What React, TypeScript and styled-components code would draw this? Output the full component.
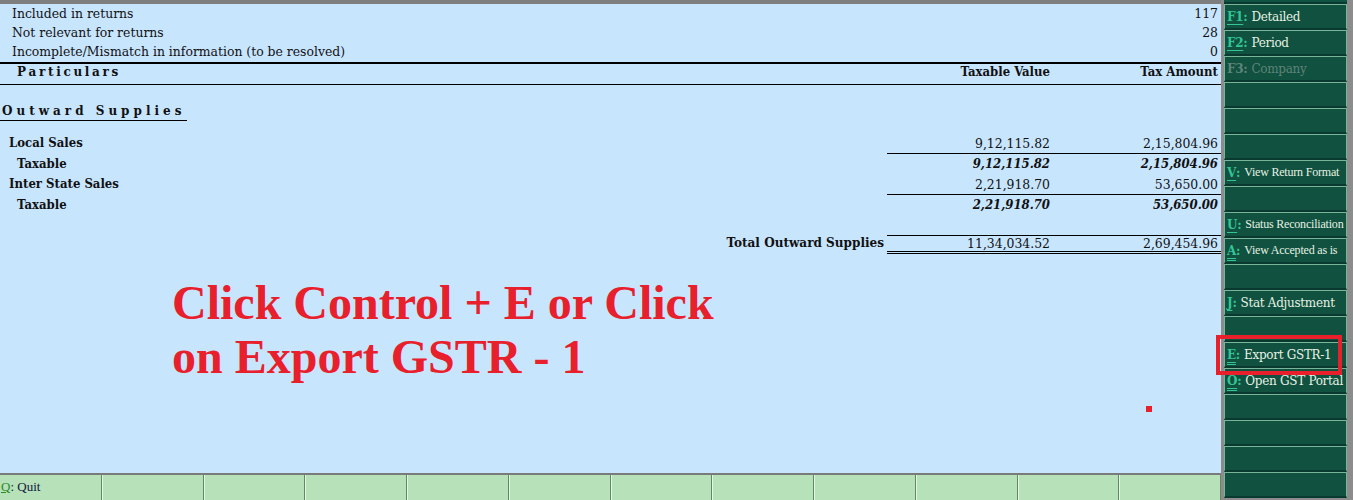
import React from 'react';
import styled, { createGlobalStyle, css } from 'styled-components';

const GlobalStyle = createGlobalStyle`
  html, body {
    margin: 0;
    padding: 0;
    background: #8c8c8c;
    overflow: hidden;
  }
  body {
    font-family: "DejaVu Serif", serif;
  }
`;

const serif = `"DejaVu Serif Condensed", "DejaVu Serif", serif`;
const wideSerif = `"DejaVu Serif", serif`;
const narrowSerif = `"Liberation Serif", "Times New Roman", serif`;

type SideItem = {
  keyName?: string;
  label?: string;
  disabled?: boolean;
  narrow?: boolean;
  double?: boolean;
};

const sideItems: SideItem[] = [
  { keyName: 'F1', label: 'Detailed' },
  { keyName: 'F2', label: 'Period' },
  { keyName: 'F3', label: 'Company', disabled: true },
  {},
  {},
  {},
  { keyName: 'V', label: 'View Return Format', narrow: true },
  {},
  { keyName: 'U', label: 'Status Reconciliation', narrow: true },
  { keyName: 'A', label: 'View Accepted as is', narrow: true, double: true },
  {},
  { keyName: 'J', label: 'Stat Adjustment' },
  {},
  { keyName: 'E', label: 'Export GSTR-1', double: true },
  { keyName: 'O', label: 'Open GST Portal', double: true },
  {},
  {},
  {},
  {},
];

const summary = [
  { label: 'Included in returns', value: '117' },
  { label: 'Not relevant for returns', value: '28' },
  { label: 'Incomplete/Mismatch in information (to be resolved)', value: '0' },
];

type Line = {
  label: string;
  taxable: string;
  tax: string;
  indent?: boolean;
  italic?: boolean;
  rule?: boolean;
};

const lines: Line[] = [
  { label: 'Local Sales', taxable: '9,12,115.82', tax: '2,15,804.96', rule: true },
  { label: 'Taxable', taxable: '9,12,115.82', tax: '2,15,804.96', indent: true, italic: true },
  { label: 'Inter State Sales', taxable: '2,21,918.70', tax: '53,650.00', rule: true },
  { label: 'Taxable', taxable: '2,21,918.70', tax: '53,650.00', indent: true, italic: true },
];

function App() {
  return (
    <>
      <GlobalStyle />
      <Screen>
        <MainColumn>
          <TopStrip />
          <Report>
            {summary.map((s) => (
              <SummaryRow key={s.label}>
                <span>{s.label}</span>
                <span>{s.value}</span>
              </SummaryRow>
            ))}
            <HeaderRow>
              <Spaced>Particulars</Spaced>
              <HeadCell>Taxable Value</HeadCell>
              <HeadCell>Tax Amount</HeadCell>
            </HeaderRow>
            <Section>
              <SectionTitle>Outward Supplies</SectionTitle>
            </Section>
            {lines.map((l, i) => (
              <DataRow key={i}>
                <Label $indent={l.indent}>{l.label}</Label>
                <Amount $italic={l.italic} $rule={l.rule}>
                  {l.taxable}
                </Amount>
                <Amount $italic={l.italic} $rule={l.rule}>
                  {l.tax}
                </Amount>
              </DataRow>
            ))}
            <TotalRow>
              <TotalLabel>Total Outward Supplies</TotalLabel>
              <TotalAmount>11,34,034.52</TotalAmount>
              <TotalAmount>2,69,454.96</TotalAmount>
            </TotalRow>
            <Callout>
              Click Control + E or Click
              <br />
              on Export GSTR - 1
            </Callout>
            <Dot />
          </Report>
          <ButtonBar>
            {Array.from({ length: 12 }).map((_, i) => (
              <BarCell key={i}>
                {i === 0 && (
                  <>
                    <BarKey>Q</BarKey>: Quit
                  </>
                )}
              </BarCell>
            ))}
          </ButtonBar>
        </MainColumn>
        <Sidebar>
          <SideStub />
          {sideItems.map((item, i) => (
            <SideButton key={i} $disabled={item.disabled}>
              {item.keyName && (
                <>
                  <SideKey $disabled={item.disabled} $double={item.double}>
                    {item.keyName}
                  </SideKey>
                  <SideColon $disabled={item.disabled}>:</SideColon>
                  <SideLabel $narrow={item.narrow}>{item.label}</SideLabel>
                </>
              )}
            </SideButton>
          ))}
          <Highlight />
        </Sidebar>
      </Screen>
    </>
  );
}

const Screen = styled.div`
  display: grid;
  grid-template-columns: 1221px 1fr;
  height: 500px;
  width: 1353px;
  background: #8c8c8c;
`;

const MainColumn = styled.div`
  display: flex;
  flex-direction: column;
  height: 500px;
`;

const TopStrip = styled.div`
  height: 4px;
  background: #7e7e7e;
  flex: none;
`;

const Report = styled.div`
  position: relative;
  flex: 1;
  background: #c8e5fe;
  color: #111;
  font-family: ${serif};
  font-stretch: condensed;
  font-size: 13.8px;
  border-bottom: 2px solid #7a7a7a;
`;

const SummaryRow = styled.div`
  display: flex;
  justify-content: space-between;
  height: 19px;
  line-height: 18px;
  padding: 0 3px 0 12px;
`;

const HeaderRow = styled.div`
  display: grid;
  grid-template-columns: 1fr 166px 168px;
  height: 20px;
  line-height: 16px;
  margin-top: 1px;
  border-top: 2px solid #000;
  border-bottom: 1px solid #000;
  font-weight: bold;
  font-size: 13px;
`;

const Spaced = styled.span`
  padding-left: 17px;
  font-family: ${wideSerif};
  font-stretch: normal;
  font-size: 12px;
  letter-spacing: 2.7px;
`;

const HeadCell = styled.span`
  text-align: right;
  padding-right: 3px;
`;

const Section = styled.div`
  padding-top: 17px;
  height: 48px;
  box-sizing: border-box;
`;

const SectionTitle = styled.span`
  display: inline-block;
  padding: 0 2px;
  line-height: 17px;
  font-family: ${wideSerif};
  font-stretch: normal;
  font-size: 12px;
  font-weight: bold;
  letter-spacing: 4px;
  border-bottom: 1px solid #000;
`;

const DataRow = styled.div`
  display: grid;
  grid-template-columns: 1fr 166px 168px;
  height: 20.5px;
  line-height: 20px;
`;

const Label = styled.span<{ $indent?: boolean }>`
  font-weight: bold;
  font-size: 13px;
  padding-left: ${(p) => (p.$indent ? '17px' : '9px')};
`;

const Amount = styled.span<{ $italic?: boolean; $rule?: boolean }>`
  text-align: right;
  padding-right: 3px;
  ${(p) =>
    p.$italic &&
    css`
      font-style: italic;
      font-weight: bold;
      font-size: 13px;
    `}
  ${(p) =>
    p.$rule &&
    css`
      border-bottom: 1px solid #000;
    `}
`;

const TotalRow = styled.div`
  display: grid;
  grid-template-columns: 1fr 166px 168px;
  margin-top: 20px;
  height: 17px;
  line-height: 15px;
`;

const TotalLabel = styled.span`
  font-weight: bold;
  font-size: 13.4px;
  text-align: right;
  padding-right: 3px;
`;

const TotalAmount = styled.span`
  text-align: right;
  padding-right: 3px;
  border-top: 1px solid #000;
  border-bottom: 3px double #000;
`;

const Callout = styled.div`
  margin: 24px 0 0 172px;
  font-family: "Liberation Serif", "Times New Roman", serif;
  font-stretch: normal;
  font-weight: bold;
  font-size: 48px;
  line-height: 54px;
  color: #e8202b;
`;

const Dot = styled.div`
  position: absolute;
  left: 1146px;
  top: 402px;
  width: 6px;
  height: 6px;
  background: #e8202b;
`;

const ButtonBar = styled.div`
  display: grid;
  grid-template-columns: repeat(12, 1fr);
  height: 25px;
  flex: none;
  background: #b7e1b9;
`;

const BarCell = styled.div`
  border-left: 1px solid #e6f6e6;
  border-right: 1px solid #5f8a5f;
  font-family: ${narrowSerif};
  font-size: 13px;
  line-height: 24px;
  color: #10203f;
  padding-left: 1px;
  &:first-child {
    border-left: none;
  }
`;

const BarKey = styled.span`
  color: #2a8a2a;
  text-decoration: underline;
`;

const Sidebar = styled.div`
  position: relative;
  display: flex;
  flex-direction: column;
  padding: 0 6px 0 3px;
`;

const SideStub = styled.div`
  height: 2px;
  background: #0f5342;
  border-bottom: 2px solid #0a3a2f;
`;

const SideButton = styled.div<{ $disabled?: boolean }>`
  box-sizing: border-box;
  height: 26px;
  display: flex;
  align-items: center;
  padding-left: 2px;
  white-space: nowrap;
  overflow: hidden;
  background: #10513f;
  border: 1px solid #79b598;
  border-bottom: 2px solid #0a3a2f;
  color: ${(p) => (p.$disabled ? '#5f8379' : '#e6f2e4')};
  font-family: ${wideSerif};
  font-size: 12px;
  letter-spacing: -0.3px;
`;

const SideKey = styled.span<{ $disabled?: boolean; $double?: boolean }>`
  font-weight: bold;
  color: ${(p) => (p.$disabled ? '#5f8379' : '#34c496')};
  text-decoration: ${(p) => (p.$disabled ? 'none' : 'underline')};
  text-decoration-style: ${(p) => (p.$double ? 'double' : 'solid')};
  text-underline-offset: 3px;
`;

const SideColon = styled.span<{ $disabled?: boolean }>`
  font-weight: bold;
  color: ${(p) => (p.$disabled ? '#5f8379' : '#34c496')};
  margin-right: 4px;
`;

const SideLabel = styled.span<{ $narrow?: boolean }>`
  ${(p) =>
    p.$narrow &&
    css`
      font-family: ${narrowSerif};
      font-size: 12px;
      letter-spacing: -0.2px;
    `}
`;

const Highlight = styled.div`
  position: absolute;
  left: -5px;
  top: 335px;
  width: 118px;
  height: 32px;
  border: 4px solid #e8202b;
  pointer-events: none;
`;

export default App;
